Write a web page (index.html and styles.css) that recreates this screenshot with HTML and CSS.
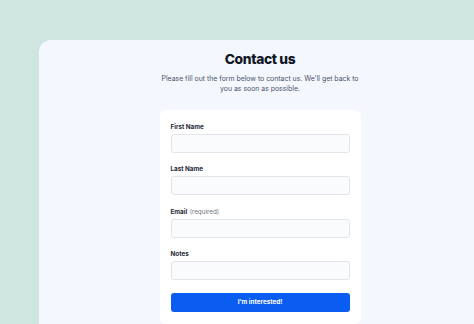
FILE: index.html
```html
<!DOCTYPE html>
<html lang="en">

<head>
    <meta charset="UTF-8">
    <meta name="viewport" content="width=device-width, initial-scale=1.0">
    <title>Contact us</title>
    <link rel="stylesheet" href="styles.css">
</head>

<body>
    <div class="panel">
        <h1>Contact us</h1>
        <p class="intro">Please fill out the form below to contact us. We'll get back to you as soon as possible.</p>
        <form class="card">
            <div class="field">
                <label for="first">First Name</label>
                <input id="first" type="text">
            </div>
            <div class="field">
                <label for="last">Last Name</label>
                <input id="last" type="text">
            </div>
            <div class="field">
                <label for="email">Email <span class="hint">(required)</span></label>
                <input id="email" type="email">
            </div>
            <div class="field">
                <label for="notes">Notes</label>
                <input id="notes" type="text">
            </div>
            <button class="submit" type="button">I'm interested!</button>
        </form>
    </div>
</body>

</html>
```

FILE: styles.css
```css
* {
    box-sizing: border-box;
    margin: 0;
    padding: 0;
}

body {
    font-family: Inter, "Noto Sans", sans-serif;
    background-color: #cfe5e0;
    width: 474px;
    height: 324px;
    overflow: hidden;
    padding: 40px 0 0 39px;
}

.panel {
    width: 442px;
    height: 300px;
    background-color: #f5f7fe;
    border-radius: 12px 0 0 0;
    padding-top: 9.5px;
    display: flex;
    flex-direction: column;
    align-items: center;
}

h1 {
    font-size: 13.8px;
    line-height: 18px;
    font-weight: 800;
    color: #111827;
    letter-spacing: -0.35px;
}

.intro {
    width: 205px;
    margin-top: 6px;
    font-size: 6.9px;
    line-height: 10.5px;
    color: #475569;
    text-align: center;
}

.card {
    width: 201px;
    margin-top: 15px;
    background-color: #fff;
    border-radius: 6px;
    padding: 12px 11px 12px;
    display: flex;
    flex-direction: column;
}

.field {
    display: flex;
    flex-direction: column;
    margin-bottom: 11.5px;
}

label {
    font-size: 6.3px;
    line-height: 10px;
    font-weight: 700;
    color: #1f2937;
    margin-bottom: 2px;
}

.hint {
    font-weight: 400;
    color: #6b7280;
    margin-left: 1px;
}

input {
    height: 19px;
    width: 179px;
    border: 1px solid #e1e4ea;
    border-radius: 3px;
    background-color: #fafbfd;
}

.submit {
    margin-top: 1px;
    height: 19px;
    width: 179px;
    border: none;
    border-radius: 3px;
    background-color: #0b5cf0;
    color: #fff;
    font-family: Inter, "Noto Sans", sans-serif;
    font-size: 6.3px;
    font-weight: 700;
}
```
